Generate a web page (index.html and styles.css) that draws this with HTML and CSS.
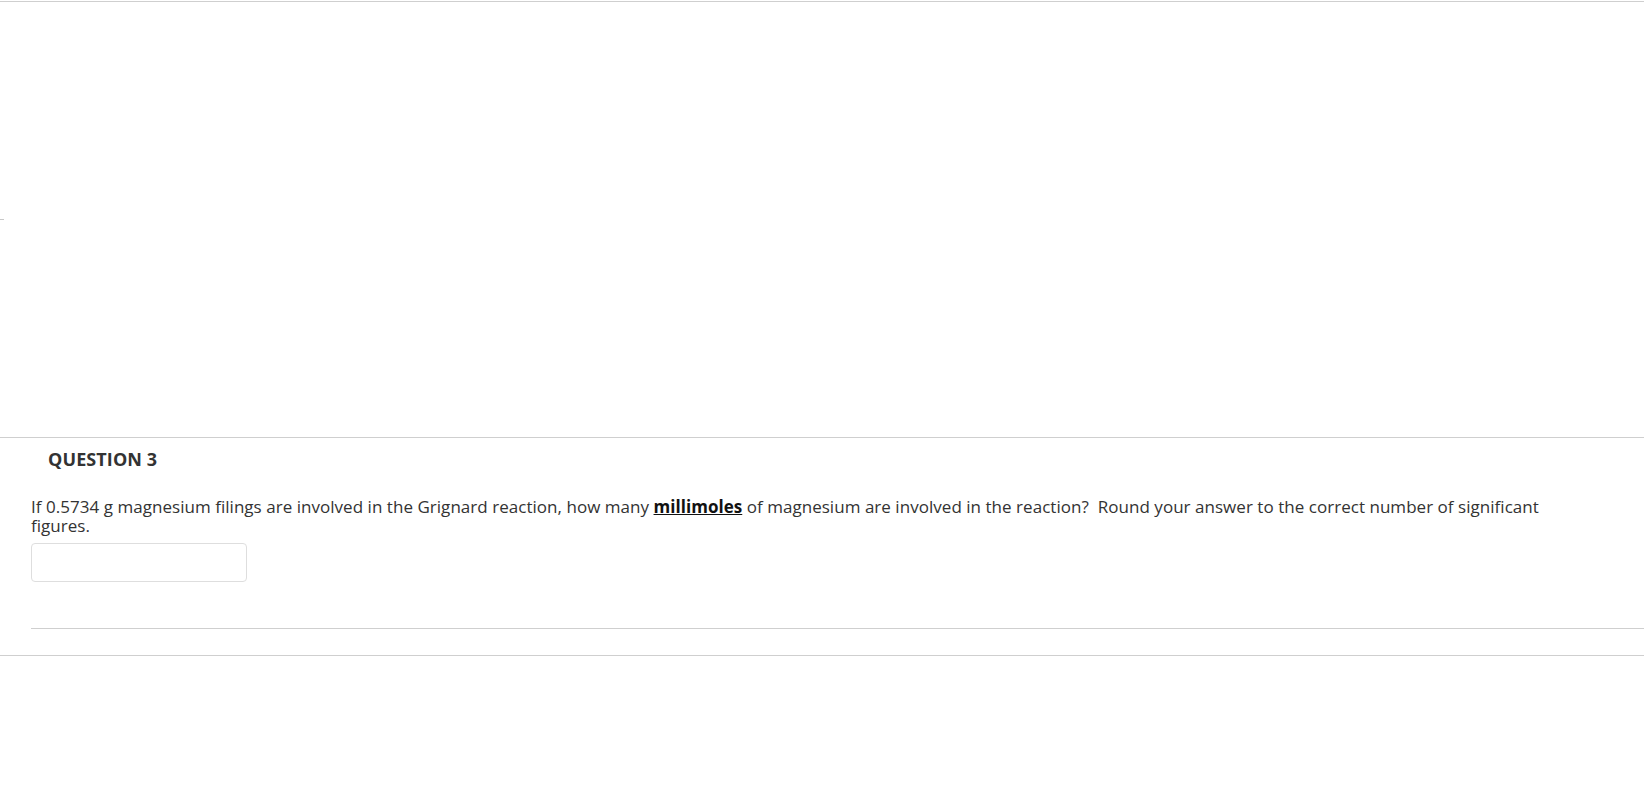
FILE: index.html
```html
<!DOCTYPE html>
<html lang="en">
<head>
<meta charset="utf-8">
<title>Question 3</title>
<link rel="stylesheet" href="styles.css">
</head>
<body>
  <div class="top-rule"></div>
  <div class="previous">
    <div class="stub"></div>
  </div>
  <section class="question">
    <h3 class="question-title">QUESTION 3</h3>
    <div class="question-body">
      <p class="prompt">If 0.5734 g magnesium filings are involved in the Grignard reaction, how many <strong class="key">millimoles</strong> of magnesium are involved in the reaction?&nbsp; Round your answer to the correct number of significant figures.</p>
      <input class="answer" type="text" aria-label="Answer">
      <div class="inner-rule"></div>
    </div>
  </section>
  <div class="bottom-rule"></div>
</body>
</html>
```

FILE: styles.css
```css
html, body {
  margin: 0;
  padding: 0;
  background: #fff;
}

body {
  font-family: "Open Sans", "Liberation Sans", Arial, sans-serif;
  color: #333;
}

.top-rule {
  margin-top: 1px;
  border-top: 1px solid #cfcfcf;
}

.previous {
  height: 435px;
  display: flex;
  flex-direction: column;
}

.stub {
  width: 4px;
  height: 1px;
  margin-top: 217px;
  background: #c8c8c8;
}

.question {
  border-top: 1px solid #cfcfcf;
}

.question-title {
  margin: 9px 0 0 48px;
  font-size: 18px;
  line-height: 24px;
  font-weight: 700;
  color: #333;
  letter-spacing: 0.1px;
}

.question-body {
  padding-left: 31px;
  padding-top: 26px;
  display: flex;
  flex-direction: column;
  align-items: flex-start;
}

.prompt {
  margin: 0;
  font-size: 17px;
  line-height: 19px;
  letter-spacing: 0.035px;
  color: #333;
  max-width: 1520px;
}

.key {
  font-weight: 700;
  color: #111;
  text-decoration: underline;
}

.answer {
  box-sizing: border-box;
  margin: 8px 0 0 0;
  width: 216px;
  height: 39px;
  border: 1px solid #dedede;
  border-radius: 4px;
  background: #fff;
  font: inherit;
  padding: 0 8px;
}

.inner-rule {
  align-self: stretch;
  margin-top: 46px;
  border-top: 1px solid #cfcfcf;
}

.bottom-rule {
  margin-top: 26px;
  border-top: 1px solid #cfcfcf;
}
```
